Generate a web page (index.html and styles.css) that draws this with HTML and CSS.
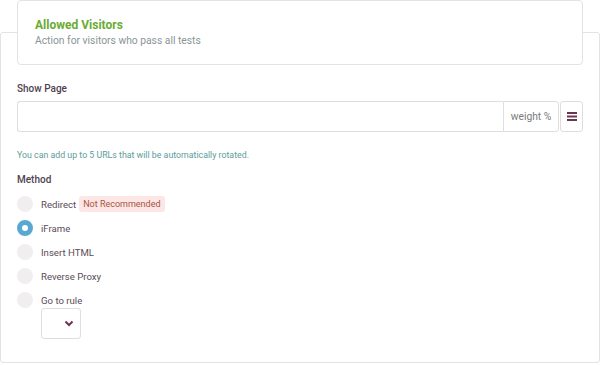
FILE: index.html
```html
<!DOCTYPE html>
<html lang="en">
<head>
    <meta charset="UTF-8">
    <title>Allowed Visitors</title>
    <link rel="stylesheet" href="styles.css">
</head>
<body>
    <div class="panel">
        <div class="head">
            <div class="head-title">Allowed Visitors</div>
            <div class="head-sub">Action for visitors who pass all tests</div>
        </div>

        <div class="field-label">Show Page</div>
        <div class="url-group">
            <input type="text" class="url-input">
            <span class="weight">weight %</span>
            <button class="menu-btn">
                <svg width="10" height="9" viewBox="0 0 10 9"><rect y="0" width="10" height="2" fill="#6b3552"/><rect y="3.5" width="10" height="2" fill="#6b3552"/><rect y="7" width="10" height="2" fill="#6b3552"/></svg>
            </button>
        </div>
        <p class="help">You can add up to 5 URLs that will be automatically rotated.</p>

        <div class="field-label method">Method</div>
        <div class="radio-row"><span class="radio"></span>Redirect <span class="badge">Not Recommended</span></div>
        <div class="radio-row"><span class="radio checked"></span>iFrame</div>
        <div class="radio-row"><span class="radio"></span>Insert HTML</div>
        <div class="radio-row"><span class="radio"></span>Reverse Proxy</div>
        <div class="radio-row"><span class="radio"></span>Go to rule</div>
        <div class="rule-select">
            <svg width="10" height="7" viewBox="0 0 10 7"><path d="M1.5 1.5 L5 5 L8.5 1.5" fill="none" stroke="#6b3552" stroke-width="2"/></svg>
        </div>
    </div>
</body>
</html>
```

FILE: styles.css
```css
body {
    margin: 0;
    font-family: 'Roboto', 'Liberation Sans', sans-serif;
    background: #fff;
    color: #4f4250;
}

.panel {
    margin-top: 32px;
    height: 331px;
    box-sizing: border-box;
    border: 1px solid #e3e3e3;
    border-radius: 3px;
    padding: 0 16px 24px;
}

.head {
    margin-top: -33px;
    background: #fff;
    border: 1px solid #e3e3e3;
    border-radius: 4px;
    padding: 16px 17px 15px;
}

.head-title {
    font-size: 12px;
    font-weight: bold;
    line-height: 16px;
    color: #6aab34;
}

.head-sub {
    font-size: 10.3px;
    line-height: 16px;
    color: #8a9596;
}

.field-label {
    margin-top: 16px;
    font-size: 10px;
    font-weight: 500;
    line-height: 16px;
}

.field-label.method {
    margin-top: 10px;
    margin-bottom: 4px;
}

.url-group {
    display: flex;
    gap: 1px;
    margin-top: 4px;
    height: 31px;
}

.url-input {
    flex: 1;
    margin: 0;
    border: 1px solid #dedede;
    border-right: none;
    border-radius: 3px 0 0 3px;
    outline: none;
    padding: 0 8px;
}

.weight {
    display: flex;
    align-items: center;
    justify-content: center;
    width: 56px;
    box-sizing: border-box;
    padding: 0 4px;
    white-space: nowrap;
    border: 1px solid #dedede;
    border-radius: 0 3px 3px 0;
    margin-left: -1px;
    font-size: 10.3px;
    color: #7b7b7b;
}

.menu-btn {
    width: 23px;
    border: 1px solid #dedede;
    border-radius: 3px;
    background: #fff;
    display: flex;
    align-items: center;
    justify-content: center;
    padding: 0;
}

.help {
    margin: 16px 0 0;
    font-size: 8.8px;
    line-height: 14px;
    color: #5d9d9c;
}

.radio-row {
    display: flex;
    align-items: center;
    height: 24px;
    font-size: 9.6px;
    color: #5a4c58;
}

.radio {
    width: 16px;
    height: 16px;
    border-radius: 50%;
    background: #f0eeee;
    margin-right: 8px;
    box-sizing: border-box;
}

.radio.checked {
    background: #fff;
    border: 5px solid #59a8d4;
}

.badge {
    margin-left: 3px;
    padding: 0 4px;
    line-height: 16px;
    border-radius: 3px;
    background: #fde6e6;
    color: #a8543f;
    font-size: 9px;
}

.rule-select {
    margin: -4px 0 0 24px;
    width: 40px;
    height: 31px;
    box-sizing: border-box;
    border: 1px solid #dedede;
    border-radius: 3px;
    display: flex;
    align-items: center;
    justify-content: flex-end;
    padding-right: 6px;
}
```
